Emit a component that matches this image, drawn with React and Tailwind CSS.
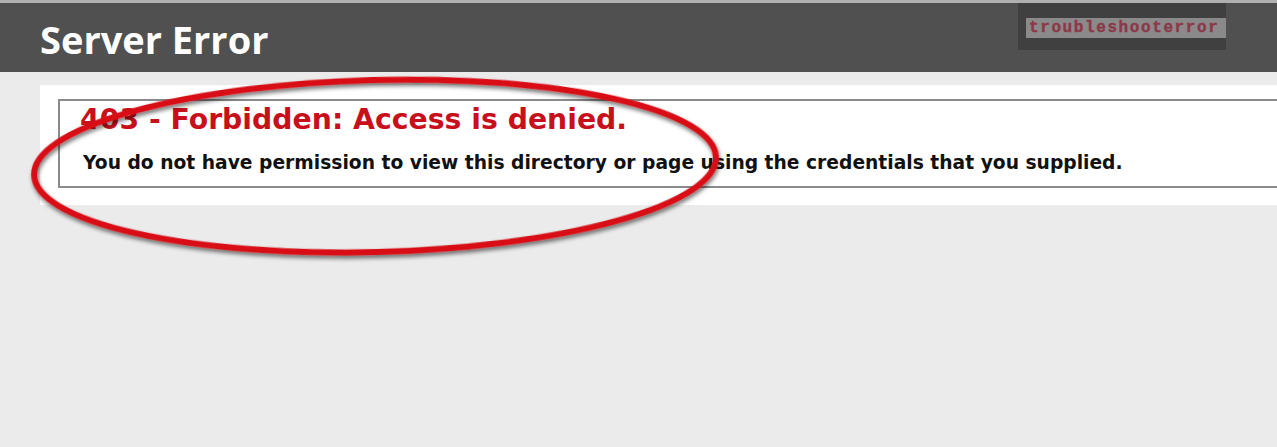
import React from 'react';

// Red marker ellipse drawn over the error box
function MarkerEllipse() {
  return (
    <svg className="absolute left-0 top-0 pointer-events-none" width="760" height="270" viewBox="0 0 760 270">
      <defs>
        <filter id="shade" x="-10%" y="-10%" width="120%" height="130%">
          <feDropShadow dx="1" dy="3" stdDeviation="2" floodColor="#000" floodOpacity="0.55" />
        </filter>
      </defs>
      <ellipse cx="375" cy="163" rx="341" ry="86" transform="rotate(-1.5 375 163)" fill="none" stroke="#d80f14" strokeWidth="6" filter="url(#shade)" />
    </svg>
  );
}

export default function App() {
  return (
    <div className="relative w-full h-[447px] overflow-hidden bg-[#ebebeb] border-t-[3px] border-[#b0b0b0]">
      <div className="relative h-[69px] bg-[#505050] pl-10 flex items-center">
        <h1 className="text-white text-[38px] font-bold leading-none pt-[2px]" style={{ fontFamily: '"Open Sans", sans-serif' }}>
          Server Error
        </h1>
        {/* watermark */}
        <div className="absolute left-[1018px] top-[-3px] w-[208px] h-[50px] bg-[#404040] flex items-start justify-end pt-[18px]">
          <div className="w-[200px] h-[20px] bg-[#8a8a8a] flex items-center pl-[3px] text-[#8c3848] text-[16px] font-bold tracking-[1.6px] leading-none" style={{ fontFamily: '"Liberation Mono", monospace', WebkitTextStroke: '0.4px #8c3848' }}>
            troubleshooterror
          </div>
        </div>
      </div>
      <div className="ml-10 mt-[13px] bg-white h-[120px] pt-[14px] pl-[18px]">
        <div className="h-[89px] border-2 border-r-0 border-[#8a8a8a] border-double pl-[20px] pt-[3px]" style={{ fontFamily: '"DejaVu Sans", Verdana, sans-serif' }}>
          <h2 className="text-[#c8101c] text-[28.3px] font-bold leading-[32px]">403 - Forbidden: Access is denied.</h2>
          <h3 className="text-[#111] text-[18.7px] font-bold mt-[15px] leading-[24px] pl-[3px]">
            You do not have permission to view this directory or page using the credentials that you supplied.
          </h3>
        </div>
      </div>
      <MarkerEllipse />
    </div>
  );
}
